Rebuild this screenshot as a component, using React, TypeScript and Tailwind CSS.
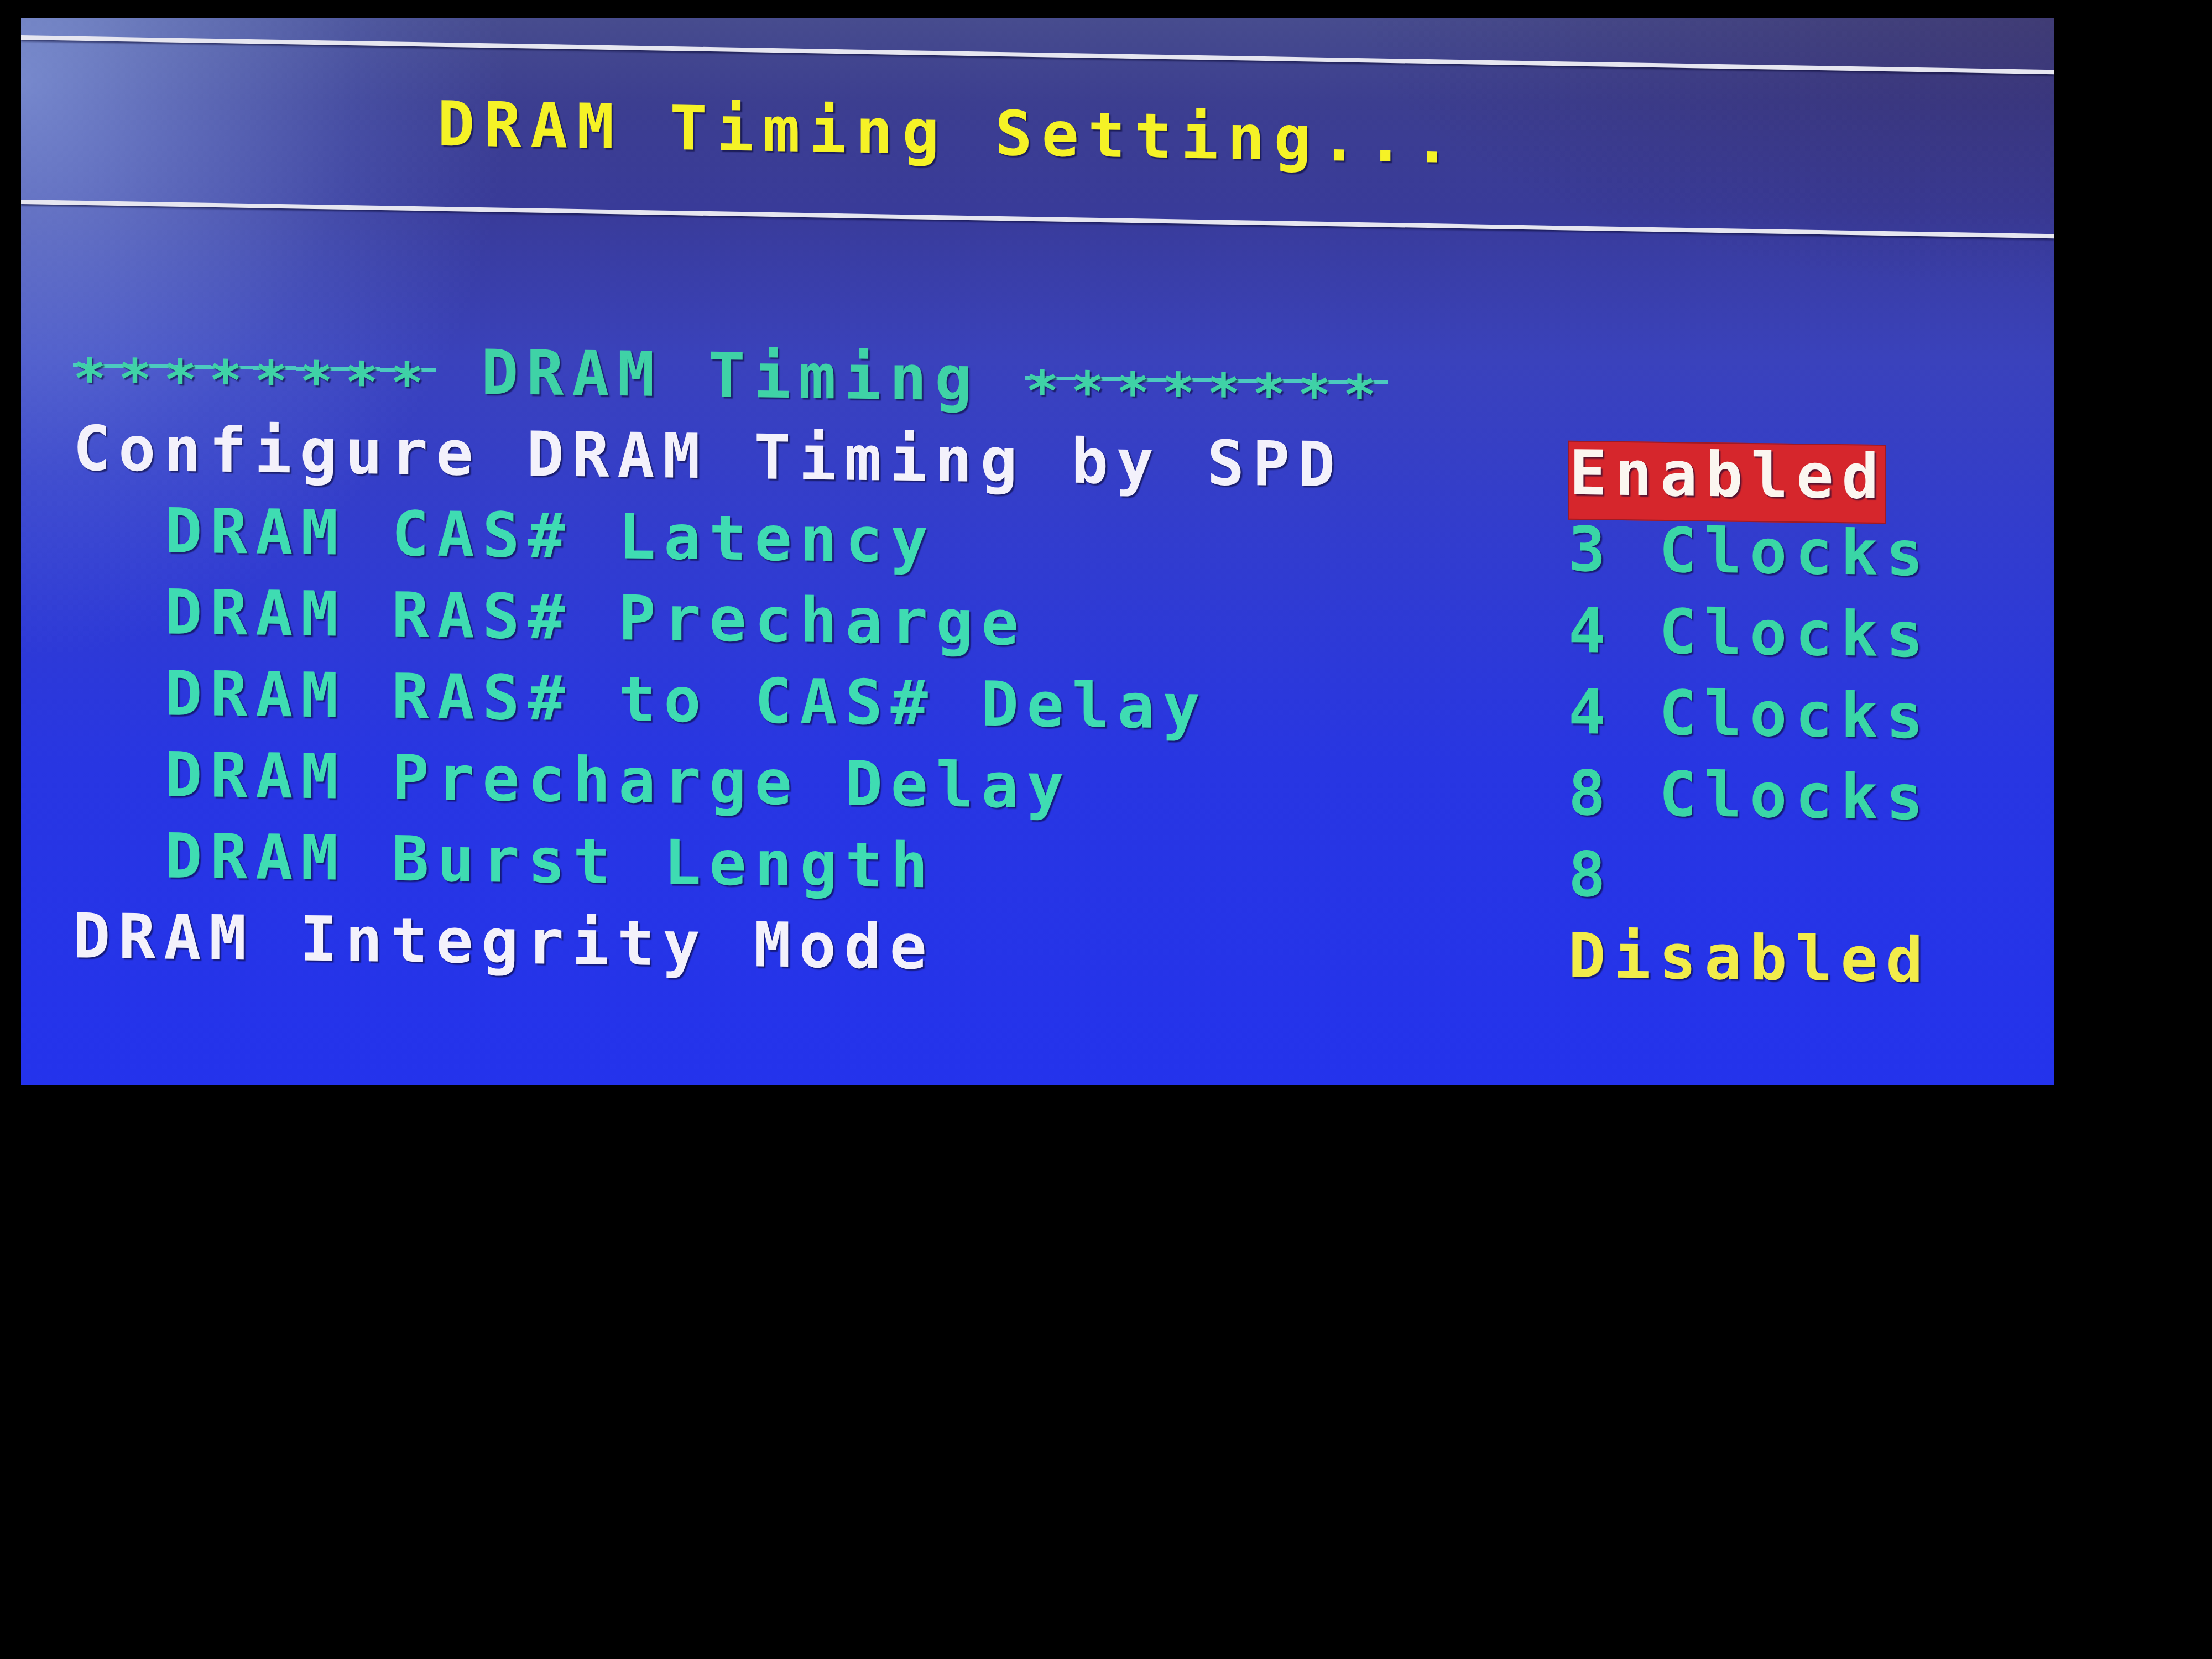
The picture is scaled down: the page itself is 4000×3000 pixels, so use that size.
type Row = {
  label: string;
  value: string;
  level: 'top' | 'sub';
  state?: 'selected' | 'warn';
};

const rows: Row[] = [
  { label: 'Configure DRAM Timing by SPD', value: 'Enabled', level: 'top', state: 'selected' },
  { label: 'DRAM CAS# Latency', value: '3 Clocks', level: 'sub' },
  { label: 'DRAM RAS# Precharge', value: '4 Clocks', level: 'sub' },
  { label: 'DRAM RAS# to CAS# Delay', value: '4 Clocks', level: 'sub' },
  { label: 'DRAM Precharge Delay', value: '8 Clocks', level: 'sub' },
  { label: 'DRAM Burst Length', value: '8', level: 'sub' },
  { label: 'DRAM Integrity Mode', value: 'Disabled', level: 'top', state: 'warn' },
];

function Stars() {
  return (
    <span className="align-[-17px] text-[100px] tracking-[21.8px] text-[#3fd2a6] bg-[linear-gradient(to_bottom,transparent_31px,#4ccabf_31px,#4ccabf_38px,transparent_38px)]">
      ********
    </span>
  );
}

function Rule() {
  return <div className="h-[8px] bg-[#e6e6f0] shadow-[0_3px_3px_rgba(10,10,50,0.55)]" />;
}

function SettingRow({ row }: { row: Row }) {
  return (
    <div className="flex h-[147px] leading-[147px] whitespace-pre">
      <div
        className={
          row.level === 'top'
            ? 'w-[2704px] shrink-0 text-[#f3f1fb]'
            : 'w-[2704px] shrink-0 pl-[166px] text-[#3fdcb2]'
        }
      >
        {row.label}
      </div>
      {row.state === 'selected' ? (
        <div className="mt-[24px] h-[143px] w-[574px] shrink-0 leading-[112px] bg-[#d6262c] border-2 border-[#9e1a24] text-[#fbf6f0]">
          {row.value}
        </div>
      ) : (
        <div className={row.state === 'warn' ? 'text-[#f2ec4a]' : 'text-[#3ad6a6]'}>{row.value}</div>
      )}
    </div>
  );
}

export default function App() {
  return (
    <div className="w-[4000px] h-[3000px] bg-black pl-[38px] pt-[33px] font-['DejaVu_Sans_Mono','Liberation_Mono',monospace] font-bold text-[112px] tracking-[14.6px] [text-shadow:3px_3px_2px_rgba(8,8,50,0.6)]">
      <div className="w-[3676px] h-[1929px] overflow-hidden [background-image:radial-gradient(ellipse_1100px_1300px_at_0%_6%,rgba(165,195,255,0.55),rgba(120,150,240,0.18)_55%,transparent_80%),radial-gradient(ellipse_1800px_700px_at_100%_0%,rgba(50,30,70,0.35),transparent_70%),linear-gradient(180deg,#474c8e_0%,#3c3e90_8%,#393b99_18%,#3a42bc_32%,#313ccf_50%,#2836e2_70%,#2433ec_100%)]">
        <div className="origin-left skew-y-[0.97deg] pt-[31px]">
          <Rule />
          <div className="mt-[66px] h-[146px] pl-[753px] leading-[146px] tracking-[16.6px] whitespace-pre text-[#f5f226]">
            DRAM Timing Setting...
          </div>
          <div className="mt-[77px]">
            <Rule />
          </div>
        </div>

        <div className="origin-left skew-y-[0.75deg] pt-[220px] pl-[94px]">
          <div className="h-[147px] leading-[147px] whitespace-pre text-[#3fd2a6]">
            <Stars /> DRAM Timing <Stars />
          </div>
          {rows.map((row) => (
            <SettingRow key={row.label} row={row} />
          ))}
        </div>
      </div>
    </div>
  );
}
